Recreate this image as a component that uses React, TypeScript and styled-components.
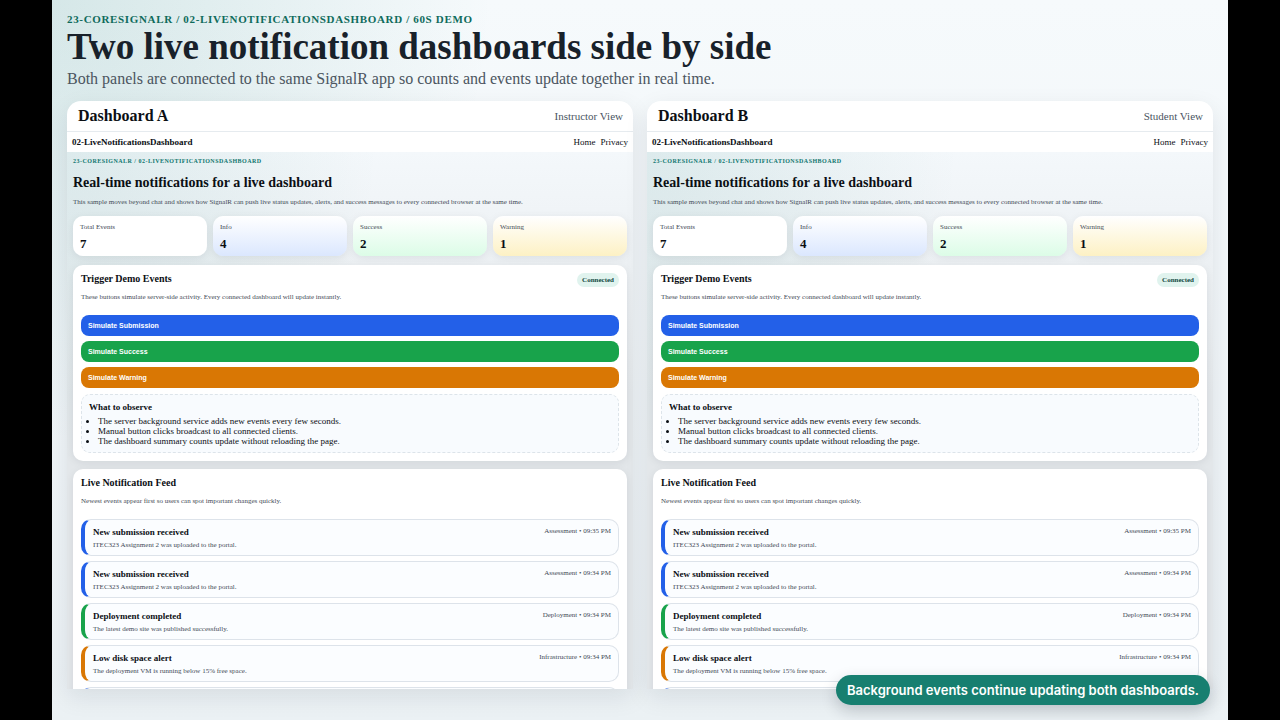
import React from "react";
import styled, { createGlobalStyle } from "styled-components";

type Tone = "info" | "success" | "warning";

const toneColor: Record<Tone, string> = {
  info: "#2360e8",
  success: "#18a34b",
  warning: "#d97704",
};

const GlobalStyle = createGlobalStyle`
  * { box-sizing: border-box; }
  body {
    margin: 0;
    background: #000;
    color: #0b0f14;
    font-family: "Liberation Serif", "Times New Roman", serif;
  }
  h1, h2, h3, h4, p, ul { margin: 0; }
`;

const Stage = styled.div`
  position: relative;
  display: flex;
  flex-direction: column;
  height: 100vh;
  margin: 0 52px;
  padding: 12px 15px 31px;
  overflow: hidden;
  background:
    radial-gradient(circle at top left, rgba(15, 118, 110, 0.14), transparent 32%),
    linear-gradient(180deg, #f6fafc 0%, #ebf1f4 100%);
`;

const Kicker = styled.p`
  color: #0f6b5c;
  font-size: 11px;
  font-weight: 700;
  line-height: 14px;
  letter-spacing: 0.06em;
  text-transform: uppercase;
`;

const PageTitle = styled.h1`
  color: #18212a;
  font-size: 37px;
  line-height: 42px;
`;

const PageLead = styled.p`
  color: #4b5560;
  font-size: 16px;
  line-height: 22px;
`;

const Panels = styled.main`
  display: grid;
  grid-template-columns: 1fr 1fr;
  gap: 14px;
  flex: 1;
  min-height: 0;
  margin-top: 11px;
`;

const Panel = styled.section`
  display: flex;
  flex-direction: column;
  min-height: 0;
  overflow: hidden;
  border-radius: 14px 14px 0 0;
  background: #fff;
  box-shadow: 0 8px 24px rgba(15, 23, 42, 0.09);
`;

const PanelHeader = styled.header`
  display: flex;
  align-items: center;
  justify-content: space-between;
  height: 31px;
  padding: 0 10px 0 11px;
  border-bottom: 1px solid #e6ebef;
  flex-shrink: 0;
`;

const PanelName = styled.h2`
  font-size: 16px;
  line-height: 20px;
`;

const PanelRole = styled.span`
  color: #4b5563;
  font-size: 11px;
`;

const NavBar = styled.nav`
  display: flex;
  align-items: center;
  justify-content: space-between;
  flex-shrink: 0;
  height: 20px;
  padding: 0 5px;
  font-size: 9px;
`;

const NavLinks = styled.div`
  display: flex;
  gap: 5px;
`;

const NavLink = styled.a<{ $brand?: boolean }>`
  color: #0b0f14;
  font-weight: ${(p) => (p.$brand ? 700 : 400)};
  text-decoration: none;
`;

const Screen = styled.div`
  flex: 1;
  min-height: 0;
  padding: 5px 6px 0;
  overflow: hidden;
  background:
    radial-gradient(circle at top left, rgba(15, 118, 110, 0.1), transparent 40%),
    linear-gradient(180deg, #f4f8fb 0%, #e3e7ea 45%);
`;

const SmallKicker = styled.p`
  color: #0f766e;
  font-size: 6px;
  font-weight: 700;
  line-height: 8px;
  letter-spacing: 0.08em;
  text-transform: uppercase;
`;

const ScreenTitle = styled.h3`
  margin-top: 9px;
  font-size: 14px;
  line-height: 18px;
`;

const Muted = styled.p`
  color: #3f4a56;
  font-size: 7px;
  line-height: 10px;
`;

const Intro = styled(Muted)`
  margin-top: 5px;
`;

const Stats = styled.div`
  display: grid;
  grid-template-columns: repeat(4, 1fr);
  gap: 6px;
  margin: 9px 0;
`;

const statTint: Record<string, string> = {
  plain: "#fff",
  info: "#dbe7fe",
  success: "#dcfce7",
  warning: "#fdf1c4",
};

const Stat = styled.div<{ $tint: string }>`
  height: 40px;
  padding: 6px 7px;
  border-radius: 10px;
  background: linear-gradient(180deg, #fff, ${(p) => statTint[p.$tint]});
  box-shadow: 0 2px 8px rgba(15, 23, 42, 0.08);
`;

const StatValue = styled.strong`
  display: block;
  margin-top: 4px;
  font-size: 13px;
  line-height: 16px;
`;

const Card = styled.section`
  margin-bottom: 8px;
  padding: 8px;
  border-radius: 10px;
  background: #fff;
  box-shadow: 0 2px 8px rgba(15, 23, 42, 0.08);
`;

const CardHead = styled.div`
  display: flex;
  align-items: flex-start;
  justify-content: space-between;
  height: 12px;
`;

const CardTitle = styled.h4`
  font-size: 10px;
  line-height: 12px;
`;

const CardText = styled(Muted)`
  margin-top: 7px;
`;

const Badge = styled.span`
  padding: 0 5px;
  border-radius: 8px;
  background: #e0f3ee;
  color: #12493f;
  font-size: 7px;
  font-weight: 700;
  line-height: 14px;
`;

const Actions = styled.div`
  display: grid;
  gap: 5px;
  margin: 13px 0 6px;
`;

const ActionButton = styled.button<{ $tone: Tone }>`
  height: 21px;
  padding: 0 7px;
  border: 0;
  border-radius: 8px;
  background: ${(p) => toneColor[p.$tone]};
  color: #fff;
  font: 700 7px "Liberation Sans", Arial, sans-serif;
  text-align: left;
`;

const Notes = styled.div`
  padding: 6px 7px;
  border: 1px dashed #dde4ea;
  border-radius: 9px;
  background: #f8fbfe;
`;

const NotesTitle = styled.h4`
  font-size: 9px;
  line-height: 12px;
`;

const NotesList = styled.ul`
  margin-top: 3px;
  padding-left: 9px;
  font-size: 9px;
  line-height: 10px;
`;

const Feed = styled.div`
  display: grid;
  gap: 5px;
  margin-top: 13px;
`;

const FeedItem = styled.article<{ $tone: Tone }>`
  height: 37px;
  padding: 6px 7px;
  border: 1px solid #dde3ea;
  border-left: 4px solid ${(p) => toneColor[p.$tone]};
  padding-left: 8px;
  border-radius: 10px;
  background: #fbfdff;
`;

const FeedTitle = styled(CardTitle)`
  font-size: 9px;
`;

const FeedText = styled(Muted)`
  margin-top: 2px;
`;

const Toast = styled.div`
  position: absolute;
  right: 18px;
  bottom: 15px;
  padding: 0 11px;
  border-radius: 15px;
  background: #177f70;
  box-shadow: 0 6px 16px rgba(15, 23, 42, 0.2);
  color: #fff;
  font: 600 13px/30px Inter, "Liberation Sans", sans-serif;
`;

const stats = [
  { label: "Total Events", value: 7, tint: "plain" },
  { label: "Info", value: 4, tint: "info" },
  { label: "Success", value: 2, tint: "success" },
  { label: "Warning", value: 1, tint: "warning" },
];

const actions: { label: string; tone: Tone }[] = [
  { label: "Simulate Submission", tone: "info" },
  { label: "Simulate Success", tone: "success" },
  { label: "Simulate Warning", tone: "warning" },
];

const feed: { title: string; text: string; meta: string; tone: Tone }[] = [
  { title: "New submission received", text: "ITEC323 Assignment 2 was uploaded to the portal.", meta: "Assessment • 09:35 PM", tone: "info" },
  { title: "New submission received", text: "ITEC323 Assignment 2 was uploaded to the portal.", meta: "Assessment • 09:34 PM", tone: "info" },
  { title: "Deployment completed", text: "The latest demo site was published successfully.", meta: "Deployment • 09:34 PM", tone: "success" },
  { title: "Low disk space alert", text: "The deployment VM is running below 15% free space.", meta: "Infrastructure • 09:34 PM", tone: "warning" },
];

function Dashboard({ name, role }: { name: string; role: string }) {
  return (
    <Panel>
      <PanelHeader>
        <PanelName>{name}</PanelName>
        <PanelRole>{role}</PanelRole>
      </PanelHeader>
      <NavBar>
        <NavLink href="#" $brand>02-LiveNotificationsDashboard</NavLink>
        <NavLinks>
          <NavLink href="#">Home</NavLink>
          <NavLink href="#">Privacy</NavLink>
        </NavLinks>
      </NavBar>
      <Screen>
        <SmallKicker>23-CoreSignalR / 02-LiveNotificationsDashboard</SmallKicker>
        <ScreenTitle>Real-time notifications for a live dashboard</ScreenTitle>
        <Intro>
          This sample moves beyond chat and shows how SignalR can push live status updates, alerts, and success messages to every connected browser at the same time.
        </Intro>
        <Stats>
          {stats.map((s) => (
            <Stat key={s.label} $tint={s.tint}>
              <Muted>{s.label}</Muted>
              <StatValue>{s.value}</StatValue>
            </Stat>
          ))}
        </Stats>
        <Card>
          <CardHead>
            <CardTitle>Trigger Demo Events</CardTitle>
            <Badge>Connected</Badge>
          </CardHead>
          <CardText>These buttons simulate server-side activity. Every connected dashboard will update instantly.</CardText>
          <Actions>
            {actions.map((a) => (
              <ActionButton key={a.label} type="button" $tone={a.tone}>{a.label}</ActionButton>
            ))}
          </Actions>
          <Notes>
            <NotesTitle>What to observe</NotesTitle>
            <NotesList>
              <li>The server background service adds new events every few seconds.</li>
              <li>Manual button clicks broadcast to all connected clients.</li>
              <li>The dashboard summary counts update without reloading the page.</li>
            </NotesList>
          </Notes>
        </Card>
        <Card>
          <CardTitle>Live Notification Feed</CardTitle>
          <CardText>Newest events appear first so users can spot important changes quickly.</CardText>
          <Feed>
            {feed.map((f, i) => (
              <FeedItem key={i} $tone={f.tone}>
                <CardHead>
                  <FeedTitle>{f.title}</FeedTitle>
                  <Muted>{f.meta}</Muted>
                </CardHead>
                <FeedText>{f.text}</FeedText>
              </FeedItem>
            ))}
            <FeedItem $tone="info" />
          </Feed>
        </Card>
      </Screen>
    </Panel>
  );
}

export default function App() {
  return (
    <>
      <GlobalStyle />
      <Stage>
        <header>
          <Kicker>23-CoreSignalR / 02-LiveNotificationsDashboard / 60s demo</Kicker>
          <PageTitle>Two live notification dashboards side by side</PageTitle>
          <PageLead>Both panels are connected to the same SignalR app so counts and events update together in real time.</PageLead>
        </header>
        <Panels>
          <Dashboard name="Dashboard A" role="Instructor View" />
          <Dashboard name="Dashboard B" role="Student View" />
        </Panels>
        <Toast role="status">Background events continue updating both dashboards.</Toast>
      </Stage>
    </>
  );
}
